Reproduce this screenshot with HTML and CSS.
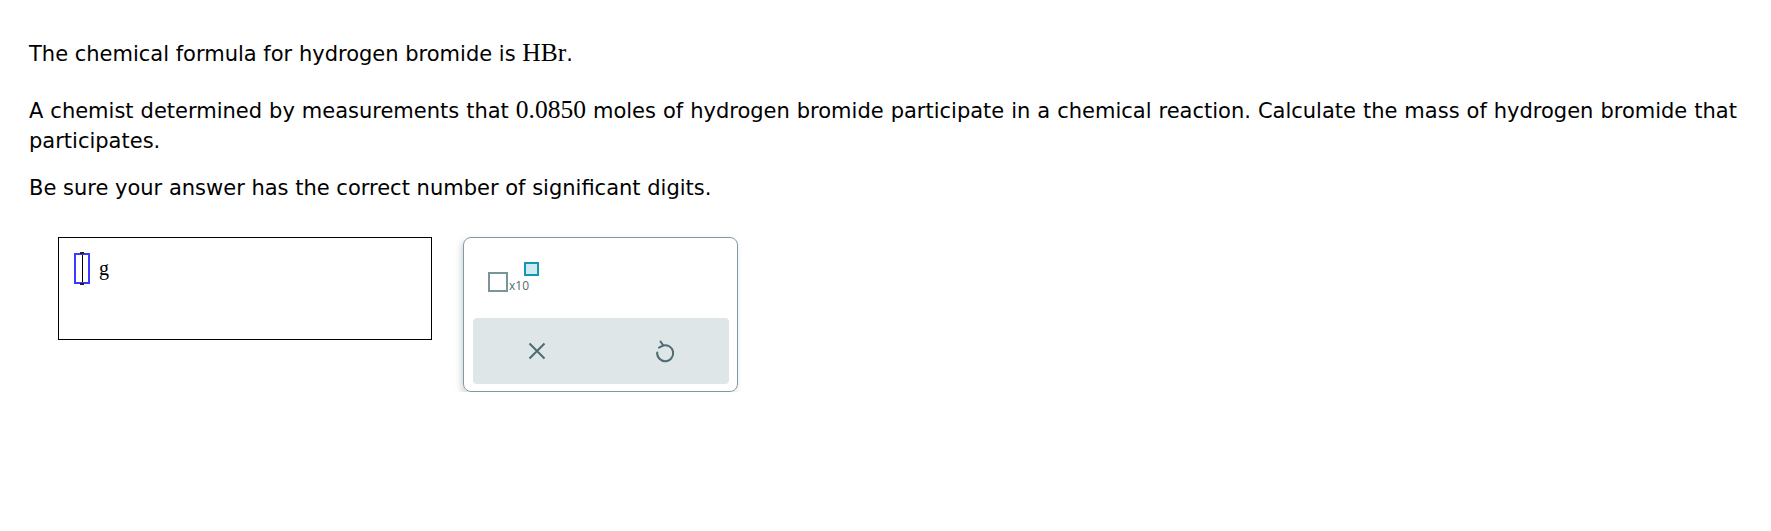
FILE: index.html
```html
<!DOCTYPE html>
<html>
<head>
<meta charset="utf-8">
<link rel="stylesheet" href="styles.css">
</head>
<body>
<div class="question">
  <p class="para">The chemical formula for hydrogen bromide is <span class="math">HBr</span>.</p>
  <p class="para para-2"><span>A chemist determined by measurements that</span> <span class="math">0.0850</span> <span>moles of hydrogen bromide participate in a chemical reaction. Calculate the mass of hydrogen bromide that</span> <span>participates.</span></p>
  <p class="para para-3">Be sure your answer has the correct number of significant digits.</p>
  <div class="answer-row">
    <div class="answer-box">
      <span class="cursor"><span class="cursor-line"></span></span>
      <span class="unit">g</span>
    </div>
    <div class="keypad">
      <div class="keypad-top">
        <div class="sci">
          <span class="sci-base"></span>
          <span class="sci-x">x10</span>
          <span class="sci-exp"></span>
        </div>
      </div>
      <div class="keypad-bar">
        <button class="key" aria-label="clear">
          <svg width="20" height="20" viewBox="0 0 20 20"><path d="M2.5 2.5 L17.5 17.5 M17.5 2.5 L2.5 17.5" stroke="#4f6b73" stroke-width="2" fill="none"/></svg>
        </button>
        <button class="key" aria-label="undo">
          <svg width="22" height="24" viewBox="0 0 22 24"><path d="M8.6 6.6 A8 8 0 1 1 3.2 13.5" stroke="#4f6b73" stroke-width="2" fill="none" stroke-linecap="round"/><path d="M6.5 2.5 L9.2 6.4 L5 8.6" stroke="#4f6b73" stroke-width="2" fill="none" stroke-linecap="round" stroke-linejoin="round"/></svg>
        </button>
      </div>
    </div>
  </div>
</div>
</body>
</html>
```
FILE: styles.css
```css
html, body {
  margin: 0;
  padding: 0;
  background: #fff;
}
body {
  font-family: "DejaVu Sans", Verdana, sans-serif;
  color: #000;
}
.question {
  padding: 39px 20px 0 29px;
  font-size: 21px;
  line-height: 30px;
}
.para {
  margin: 0;
}
.para-2 {
  margin-top: 27px;
  word-spacing: 0.3px;
}
.para-3 {
  margin-top: 17px;
}
.math {
  font-family: "Liberation Serif", "Times New Roman", serif;
  font-size: 25.5px;
  line-height: 1;
}
.answer-row {
  display: flex;
  align-items: flex-start;
  margin-top: 34px;
  margin-left: 29px;
  gap: 31px;
}
.answer-box {
  width: 374px;
  height: 103px;
  border: 1px solid #000;
  display: flex;
  align-items: flex-start;
  padding: 15px 0 0 15px;
  box-sizing: border-box;
}
.cursor {
  position: relative;
  width: 16px;
  height: 31px;
  border: 2px solid #3b3bff;
  box-sizing: border-box;
  display: flex;
  justify-content: center;
}
.cursor::before,
.cursor::after {
  content: "";
  position: absolute;
  left: 4px;
  width: 4px;
  height: 2px;
  background: #222;
}
.cursor::before {
  top: -3px;
}
.cursor::after {
  bottom: -3px;
}
.cursor-line {
  width: 1px;
  height: 100%;
  background: #000;
}
.unit {
  font-family: "Liberation Serif", "Times New Roman", serif;
  font-size: 20px;
  line-height: 24px;
  margin-left: 9px;
  margin-top: 3px;
}
.keypad {
  width: 275px;
  height: 155px;
  box-sizing: border-box;
  border: 1px solid #7f9ba2;
  border-radius: 8px;
  box-shadow: -2px 3px 6px rgba(80, 100, 110, 0.25);
  padding: 0 8px 7px 9px;
  display: flex;
  flex-direction: column;
}
.keypad-top {
  flex: 1;
}
.sci {
  position: relative;
  margin: 34px 0 0 15px;
  display: flex;
  align-items: flex-end;
  height: 20px;
}
.sci-base {
  width: 20px;
  height: 20px;
  border: 2px solid #7b939a;
  box-sizing: border-box;
  background: #fff;
}
.sci-x {
  font-family: "Open Sans", "DejaVu Sans", sans-serif;
  font-size: 12px;
  line-height: 12px;
  color: #4f6b73;
  margin-left: 1px;
}
.sci-exp {
  position: absolute;
  left: 36px;
  top: -10px;
  width: 15px;
  height: 14px;
  border: 2px solid #1597b1;
  background: #cdebf1;
  box-sizing: border-box;
}
.keypad-bar {
  height: 66px;
  background: #dfe6e8;
  border-radius: 4px;
  display: flex;
}
.key {
  flex: 1;
  border: 0;
  background: transparent;
  display: flex;
  align-items: center;
  justify-content: center;
  padding: 0;
}
```
